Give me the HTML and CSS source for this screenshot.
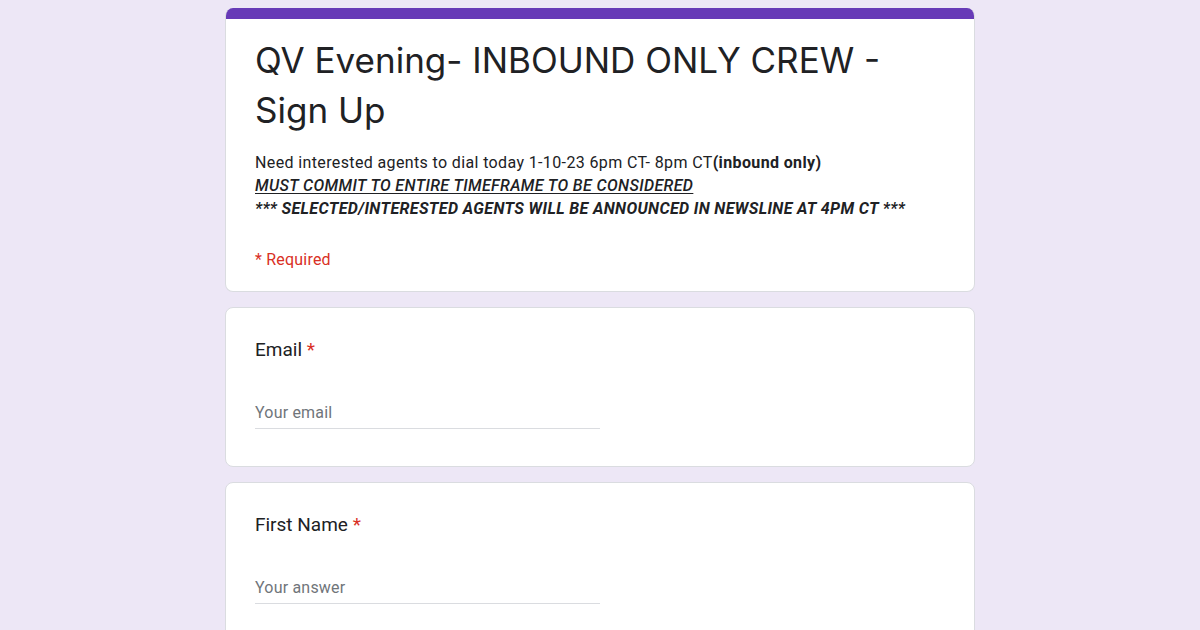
FILE: index.html
```html
<!DOCTYPE html>
<html lang="en">
<head>
<meta charset="utf-8">
<title>QV Evening- INBOUND ONLY CREW - Sign Up</title>
<link rel="stylesheet" href="styles.css">
</head>
<body>
<main class="form">
  <section class="card header-card">
    <div class="accent"></div>
    <div class="header-body">
      <h1 class="title">QV Evening- INBOUND ONLY CREW - Sign Up</h1>
      <div class="desc">
        <div>Need interested agents to dial today 1-10-23 6pm CT- 8pm CT<b>(inbound only)</b></div>
        <div class="em"><u>MUST COMMIT TO ENTIRE TIMEFRAME TO BE CONSIDERED</u></div>
        <div class="em strong">*** SELECTED/INTERESTED AGENTS WILL BE ANNOUNCED IN NEWSLINE AT 4PM CT ***</div>
      </div>
      <div class="required">* Required</div>
    </div>
  </section>

  <section class="card question">
    <div class="q-title">Email <span class="star">*</span></div>
    <div class="input"><span class="placeholder">Your email</span></div>
  </section>

  <section class="card question">
    <div class="q-title">First Name <span class="star">*</span></div>
    <div class="input"><span class="placeholder">Your answer</span></div>
  </section>
</main>
</body>
</html>
```

FILE: styles.css
```css
html, body {
  margin: 0;
  padding: 0;
}
body {
  background: #ede7f6;
  font-family: Roboto, "Liberation Sans", Arial, sans-serif;
  color: #202124;
}
.form {
  width: 750px;
  margin: 0 auto;
  padding-top: 8px;
  display: flex;
  flex-direction: column;
  gap: 15px;
}
.card {
  background: #fff;
  border: 1px solid #dadce0;
  border-radius: 8px;
  box-sizing: border-box;
}
.header-card {
  border-top: none;
  overflow: hidden;
}
.accent {
  height: 11px;
  background: #673ab7;
  margin: 0 -1px;
}
.header-body {
  padding: 16px 28px 19px 29px;
}
.title {
  margin: 0;
  font-family: Inter, "Open Sans", sans-serif;
  font-weight: 400;
  font-size: 35px;
  line-height: 50px;
  letter-spacing: 0;
  color: #202124;
}
.desc {
  margin-top: 16px;
  font-size: 16px;
  line-height: 23px;
  letter-spacing: 0.37px;
  color: #202124;
}
.desc b {
  font-weight: 700;
}
.em {
  font-style: italic;
  font-weight: 500;
}
.em u {
  text-decoration-thickness: 1px;
  text-underline-offset: 2px;
}
.strong {
  font-weight: 700;
}
.required {
  margin-top: 28px;
  font-size: 16px;
  line-height: 24px;
  letter-spacing: 0.2px;
  color: #d93025;
}
.question {
  padding: 28px 28px 37px 29px;
}
.q-title {
  font-size: 19px;
  line-height: 28px;
  color: #202124;
}
.star {
  color: #d93025;
}
.input {
  margin-top: 32px;
  width: 345px;
  height: 32px;
  border-bottom: 1px solid #dadce0;
  display: flex;
  align-items: center;
}
.placeholder {
  font-size: 16px;
  letter-spacing: 0.2px;
  color: #70757a;
}
```
